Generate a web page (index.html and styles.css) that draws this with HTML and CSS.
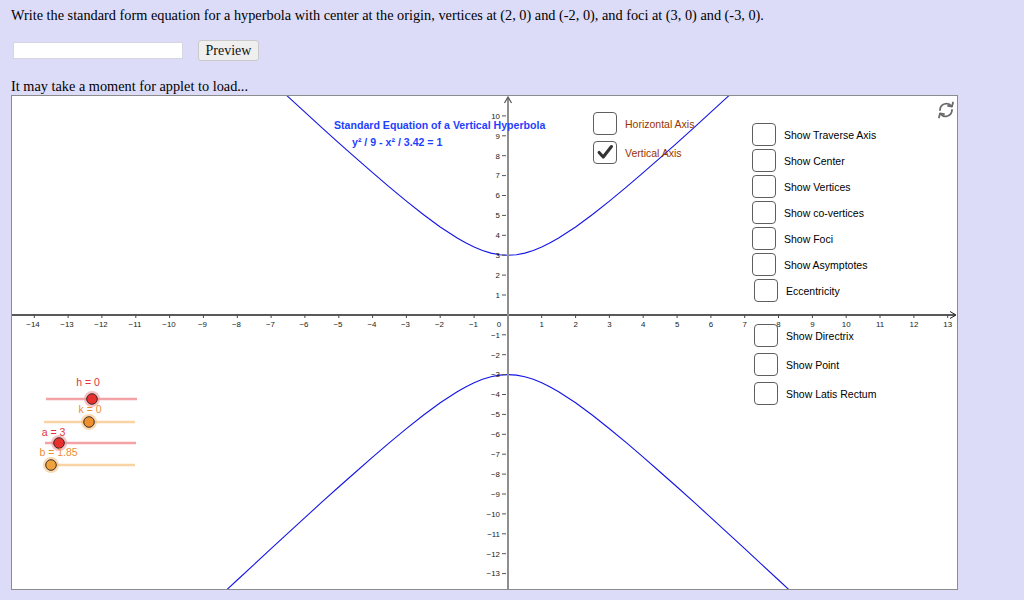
FILE: index.html
```html
<!DOCTYPE html>
<html lang="en">
<head>
<meta charset="utf-8">
<title>Hyperbola question</title>
<link rel="stylesheet" href="styles.css">
</head>
<body>
<div class="page">
  <p class="question">Write the standard form equation for a hyperbola with center at the origin, vertices at (2, 0) and (-2, 0), and foci at (3, 0) and (-3, 0).</p>
  <div class="answer-row">
    <input class="answer" type="text" aria-label="Answer">
    <button class="preview" type="button">Preview</button>
  </div>
  <p class="load-note">It may take a moment for applet to load...</p>

  <div class="applet">
    <svg class="graph" viewBox="12 96 945 493" width="945" height="493" xmlns="http://www.w3.org/2000/svg">
      <!-- hyperbola branches: y^2/9 - x^2/3.42 = 1 -->
      <g class="curve" fill="none" stroke="#1414e6" stroke-width="1.1" stroke-linejoin="round">
        <polyline points="220.3,34.2 237.3,49.9 254.2,65.6 271.1,81.2 288.0,96.7 304.9,112.2 321.8,127.6 338.7,142.8 355.7,157.9 372.6,172.6 389.5,187.1 406.4,201.1 423.3,214.5 440.2,227.0 457.2,238.0 465.6,242.8 474.1,247.0 482.5,250.5 491.0,253.1 499.4,254.7 507.9,255.2 516.4,254.7 524.8,253.1 533.3,250.5 541.7,247.0 550.2,242.8 558.6,238.0 575.6,227.0 592.5,214.5 609.4,201.1 626.3,187.1 643.2,172.6 660.1,157.9 677.1,142.8 694.0,127.6 710.9,112.2 727.8,96.7 744.7,81.2 761.6,65.6 778.5,49.9 795.5,34.2"/>
        <polyline points="220.3,595.7 237.3,580.0 254.2,564.3 271.1,548.6 288.0,533.1 304.9,517.6 321.8,502.2 338.7,487.0 355.7,472.0 372.6,457.2 389.5,442.7 406.4,428.7 423.3,415.3 440.2,402.8 457.2,391.8 465.6,387.0 474.1,382.8 482.5,379.3 491.0,376.8 499.4,375.1 507.9,374.6 516.4,375.1 524.8,376.8 533.3,379.3 541.7,382.8 550.2,387.0 558.6,391.8 575.6,402.8 592.5,415.3 609.4,428.7 626.3,442.7 643.2,457.2 660.1,472.0 677.1,487.0 694.0,502.2 710.9,517.6 727.8,533.1 744.7,548.6 761.6,564.3 778.5,580.0 795.5,595.7"/>
      </g>

      <!-- x axis -->
      <g class="x-axis">
        <line x1="12" y1="315" x2="955" y2="315" stroke="#222" stroke-width="1.3"/>
        <path d="M950,311.5 L956,315 L950,318.5" fill="none" stroke="#222" stroke-width="1"/>
        <g stroke="#444" stroke-width="1">
          <line x1="34.3" y1="315" x2="34.3" y2="318"/><line x1="68.1" y1="315" x2="68.1" y2="318"/>
          <line x1="101.9" y1="315" x2="101.9" y2="318"/><line x1="135.8" y1="315" x2="135.8" y2="318"/>
          <line x1="169.6" y1="315" x2="169.6" y2="318"/><line x1="203.4" y1="315" x2="203.4" y2="318"/>
          <line x1="237.3" y1="315" x2="237.3" y2="318"/><line x1="271.1" y1="315" x2="271.1" y2="318"/>
          <line x1="304.9" y1="315" x2="304.9" y2="318"/><line x1="338.8" y1="315" x2="338.8" y2="318"/>
          <line x1="372.6" y1="315" x2="372.6" y2="318"/><line x1="406.4" y1="315" x2="406.4" y2="318"/>
          <line x1="440.2" y1="315" x2="440.2" y2="318"/><line x1="474.1" y1="315" x2="474.1" y2="318"/>
          <line x1="541.7" y1="315" x2="541.7" y2="318"/><line x1="575.6" y1="315" x2="575.6" y2="318"/>
          <line x1="609.4" y1="315" x2="609.4" y2="318"/><line x1="643.2" y1="315" x2="643.2" y2="318"/>
          <line x1="677.1" y1="315" x2="677.1" y2="318"/><line x1="710.9" y1="315" x2="710.9" y2="318"/>
          <line x1="744.7" y1="315" x2="744.7" y2="318"/><line x1="778.5" y1="315" x2="778.5" y2="318"/>
          <line x1="812.4" y1="315" x2="812.4" y2="318"/><line x1="846.2" y1="315" x2="846.2" y2="318"/>
          <line x1="880.0" y1="315" x2="880.0" y2="318"/><line x1="913.9" y1="315" x2="913.9" y2="318"/>
          <line x1="947.7" y1="315" x2="947.7" y2="318"/>
        </g>
        <g class="tick-label" text-anchor="middle">
          <text x="33" y="327">−14</text><text x="67" y="327">−13</text><text x="101" y="327">−12</text>
          <text x="135" y="327">−11</text><text x="169" y="327">−10</text><text x="202.5" y="327">−9</text>
          <text x="236.5" y="327">−8</text><text x="270.5" y="327">−7</text><text x="304" y="327">−6</text>
          <text x="338" y="327">−5</text><text x="372" y="327">−4</text><text x="405.5" y="327">−3</text>
          <text x="439.5" y="327">−2</text><text x="473.5" y="327">−1</text><text x="499" y="327">0</text>
          <text x="541.7" y="327">1</text><text x="575.6" y="327">2</text><text x="609.4" y="327">3</text>
          <text x="643.2" y="327">4</text><text x="677.1" y="327">5</text><text x="710.9" y="327">6</text>
          <text x="744.7" y="327">7</text><text x="778.5" y="327">8</text><text x="812.4" y="327">9</text>
          <text x="846.2" y="327">10</text><text x="880" y="327">11</text><text x="913.9" y="327">12</text>
          <text x="947.7" y="327">13</text>
        </g>
      </g>

      <!-- y axis -->
      <g class="y-axis">
        <line x1="508" y1="98" x2="508" y2="589" stroke="#8f8f8f" stroke-width="2"/>
        <path d="M504.5,103 L508,97 L511.5,103" fill="none" stroke="#555" stroke-width="1.2"/>
        <g stroke="#555" stroke-width="1">
          <line x1="502" y1="115.9" x2="506" y2="115.9"/><line x1="502" y1="135.8" x2="506" y2="135.8"/>
          <line x1="502" y1="155.7" x2="506" y2="155.7"/><line x1="502" y1="175.6" x2="506" y2="175.6"/>
          <line x1="502" y1="195.5" x2="506" y2="195.5"/><line x1="502" y1="215.4" x2="506" y2="215.4"/>
          <line x1="502" y1="235.3" x2="506" y2="235.3"/><line x1="502" y1="255.2" x2="506" y2="255.2"/>
          <line x1="502" y1="275.1" x2="506" y2="275.1"/><line x1="502" y1="295.0" x2="506" y2="295.0"/>
          <line x1="502" y1="334.8" x2="506" y2="334.8"/><line x1="502" y1="354.7" x2="506" y2="354.7"/>
          <line x1="502" y1="374.6" x2="506" y2="374.6"/><line x1="502" y1="394.5" x2="506" y2="394.5"/>
          <line x1="502" y1="414.4" x2="506" y2="414.4"/><line x1="502" y1="434.3" x2="506" y2="434.3"/>
          <line x1="502" y1="454.2" x2="506" y2="454.2"/><line x1="502" y1="474.1" x2="506" y2="474.1"/>
          <line x1="502" y1="494.0" x2="506" y2="494.0"/><line x1="502" y1="513.9" x2="506" y2="513.9"/>
          <line x1="502" y1="533.8" x2="506" y2="533.8"/><line x1="502" y1="553.7" x2="506" y2="553.7"/>
          <line x1="502" y1="573.6" x2="506" y2="573.6"/>
        </g>
        <g class="tick-label" text-anchor="end">
          <text x="500" y="118.7">10</text><text x="500" y="138.6">9</text><text x="500" y="158.5">8</text>
          <text x="500" y="178.4">7</text><text x="500" y="198.3">6</text><text x="500" y="218.2">5</text>
          <text x="500" y="238.1">4</text><text x="500" y="258">3</text><text x="500" y="277.9">2</text>
          <text x="500" y="297.8">1</text>
          <text x="500" y="337.6">−1</text><text x="500" y="357.5">−2</text><text x="500" y="377.4">−3</text>
          <text x="500" y="397.3">−4</text><text x="500" y="417.2">−5</text><text x="500" y="437.1">−6</text>
          <text x="500" y="457">−7</text><text x="500" y="476.9">−8</text><text x="500" y="496.8">−9</text>
          <text x="500" y="516.7">−10</text><text x="500" y="536.6">−11</text><text x="500" y="556.5">−12</text>
          <text x="500" y="576.4">−13</text>
        </g>
      </g>

      <!-- equation caption -->
      <text class="caption" x="334" y="129">Standard Equation of a Vertical Hyperbola</text>
      <text class="caption" x="352" y="146">y² / 9 - x² / 3.42 = 1</text>

      <!-- parameter sliders -->
      <g class="sliders">
        <text class="slider-label red" x="88" y="386" text-anchor="middle">h = 0</text>
        <line x1="46" y1="399" x2="137" y2="399" stroke="#f3a3a6" stroke-width="2.5"/>
        <circle cx="92" cy="399" r="8" fill="#f08c90" fill-opacity="0.55"/>
        <circle cx="92" cy="399" r="5.3" fill="#e8312c" stroke="#222" stroke-width="0.9"/>

        <text class="slider-label orange" x="90" y="413" text-anchor="middle">k = 0</text>
        <line x1="44" y1="422" x2="135" y2="422" stroke="#f9d3a4" stroke-width="2.5"/>
        <circle cx="89" cy="422" r="8" fill="#f6c080" fill-opacity="0.6"/>
        <circle cx="89" cy="422" r="5.3" fill="#ef8f2e" stroke="#222" stroke-width="0.9"/>

        <text class="slider-label red" x="53.5" y="436" text-anchor="middle">a = 3</text>
        <line x1="45" y1="443" x2="136" y2="443" stroke="#f3a3a6" stroke-width="2.5"/>
        <circle cx="59" cy="443" r="8" fill="#f08c90" fill-opacity="0.55"/>
        <circle cx="59" cy="443" r="5.3" fill="#e8312c" stroke="#222" stroke-width="0.9"/>

        <text class="slider-label orange" x="58.5" y="456" text-anchor="middle">b = 1.85</text>
        <line x1="47" y1="465" x2="135" y2="465" stroke="#f9d3a4" stroke-width="2.5"/>
        <circle cx="51" cy="465" r="8" fill="#f6c080" fill-opacity="0.6"/>
        <circle cx="51" cy="465" r="5.3" fill="#f0a23c" stroke="#222" stroke-width="0.9"/>
      </g>

      <!-- reset icon: two curved arrows -->
      <g class="reset" fill="none" stroke="#6a6a6a" stroke-width="1.8" stroke-linecap="round" stroke-linejoin="round">
        <path d="M940,110 A6.5,6.5 0 0 1 951.5,106"/>
        <path d="M952,110 A6.5,6.5 0 0 1 940.5,114"/>
        <path d="M953,102.5 L952,106.5 L948,105.8"/>
        <path d="M939,117.5 L940,113.5 L944,114.2"/>
      </g>
    </svg>

    <div class="toggles toggles-axis">
      <label class="toggle"><span class="box"></span><span class="axis-text">Horizontal Axis</span></label>
      <label class="toggle"><span class="box checked"><svg viewBox="0 0 23 23" width="21" height="21"><path d="M4.5,11.5 L9,16.5 L18,5" fill="none" stroke="#333" stroke-width="3.4" stroke-linecap="round" stroke-linejoin="round"/></svg></span><span class="axis-text">Vertical Axis</span></label>
    </div>

    <div class="toggles toggles-features">
      <label class="toggle"><span class="box"></span><span>Show Traverse Axis</span></label>
      <label class="toggle"><span class="box"></span><span>Show Center</span></label>
      <label class="toggle"><span class="box"></span><span>Show Vertices</span></label>
      <label class="toggle"><span class="box"></span><span>Show co-vertices</span></label>
      <label class="toggle"><span class="box"></span><span>Show Foci</span></label>
      <label class="toggle"><span class="box"></span><span>Show Asymptotes</span></label>
      <label class="toggle nudge"><span class="box"></span><span>Eccentricity</span></label>
    </div>

    <div class="toggles toggles-extra">
      <label class="toggle"><span class="box"></span><span>Show Directrix</span></label>
      <label class="toggle"><span class="box"></span><span>Show Point</span></label>
      <label class="toggle"><span class="box"></span><span>Show Latis Rectum</span></label>
    </div>
  </div>
</div>
</body>
</html>
```

FILE: styles.css
```css
* {
  box-sizing: border-box;
}

body {
  margin: 0;
  background: #dcdcf9;
  color: #000;
  font-family: "Liberation Serif", "Times New Roman", serif;
  font-size: 14.3px;
}

.page {
  padding: 6px 11px 0 11px;
}

.question {
  margin: 0;
  line-height: 18px;
}

.answer-row {
  display: flex;
  align-items: center;
  margin-top: 16px;
  padding-left: 2px;
  height: 21px;
}

.answer {
  width: 170px;
  height: 17px;
  margin: 0;
  border: 1px solid #d6d6e0;
  background: #fff;
  padding: 0 3px;
}

.preview {
  margin-left: 15px;
  width: 61px;
  height: 21px;
  padding: 0;
  font-family: "Liberation Serif", "Times New Roman", serif;
  font-size: 14px;
  color: #111;
  background: #efefef;
  border: 1px solid #c9c9c9;
  border-radius: 3px;
}

.load-note {
  margin: 17px 0 0 0;
  line-height: 17px;
}

.applet {
  position: relative;
  width: 947px;
  height: 495px;
  background: #fff;
  border: 1px solid #8c8c8c;
  overflow: hidden;
}

.graph {
  display: block;
  font-family: "Liberation Sans", Arial, sans-serif;
}

.tick-label {
  font-size: 7.9px;
  fill: #1a1a1a;
}

.caption {
  font-size: 10.6px;
  font-weight: bold;
  fill: #1f3fff;
}

.slider-label {
  font-size: 10.5px;
}

.slider-label.red {
  fill: #e2333b;
}

.slider-label.orange {
  fill: #eb8d33;
}

/* checkbox groups drawn over the graph */
.toggles {
  position: absolute;
  display: flex;
  flex-direction: column;
  font-family: "Liberation Sans", Arial, sans-serif;
  font-size: 10.5px;
  color: #000;
}

.toggles-axis {
  left: 581px;
  top: 16px;
  gap: 6px;
}

.toggles-features {
  left: 740px;
  top: 27px;
  gap: 3px;
}

.toggles-extra {
  left: 742px;
  top: 228px;
  gap: 6px;
}

.toggle {
  display: flex;
  align-items: center;
  gap: 8px;
  height: 23px;
}

.toggle.nudge {
  margin-left: 2px;
}

.box {
  display: flex;
  align-items: center;
  justify-content: center;
  width: 24px;
  height: 23px;
  border: 1px solid #5f5f5f;
  border-radius: 4px;
  background: #fff;
}

.axis-text {
  color: #993300;
}
```
